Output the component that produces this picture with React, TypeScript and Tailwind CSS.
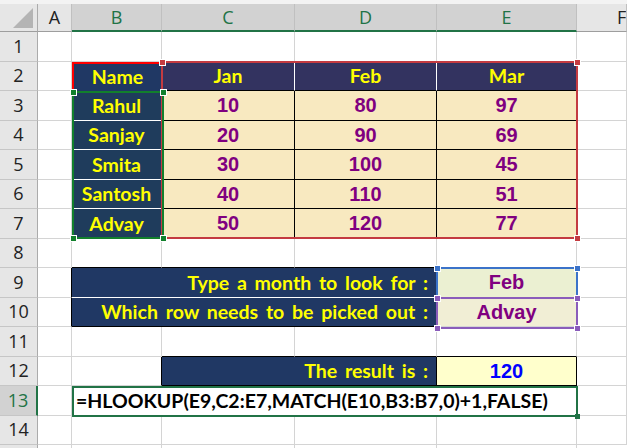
import type { ReactNode } from "react";

const CAL = "font-['Lato',sans-serif] font-bold";
const ARI = "font-['Liberation_Sans',Arial,sans-serif] font-bold";
const HDR = "font-['Open_Sans',sans-serif]";

type CellProps = {
  className?: string;
  r?: string;
  b?: string;
  children?: ReactNode;
};

function Cell({ className = "", r = "border-r-[#d4d4d4]", b = "border-b-[#d4d4d4]", children }: CellProps) {
  return (
    <div className={`flex min-w-0 items-center overflow-hidden whitespace-nowrap border-r border-b ${r} ${b} ${className}`}>
      {children}
    </div>
  );
}

function RowHead({ n, active }: { n?: number; active?: boolean }) {
  return (
    <div
      className={`flex items-center justify-center border-b border-b-[#c6c6c6] ${HDR} text-[18px] ${
        active
          ? "border-r-2 border-r-[#217346] bg-[#d2d2d2] text-[#217346]"
          : "border-r border-r-[#ababab] bg-[#e6e6e6] text-[#222222]"
      }`}
    >
      {n}
    </div>
  );
}

function ColHead({ label, active, className = "justify-center" }: { label: string; active?: boolean; className?: string }) {
  return (
    <div
      className={`flex items-center overflow-hidden border-r border-r-[#c0c0c0] ${HDR} text-[18px] ${className} ${
        active
          ? "border-b-2 border-b-[#217346] bg-[#d2d2d2] text-[#217346]"
          : "border-b border-b-[#9e9e9e] bg-[#e6e6e6] text-[#222222]"
      }`}
    >
      {label}
    </div>
  );
}

function Handle({ x, y, color }: { x: number; y: number; color: string }) {
  // corner grip of a formula reference box
  return (
    <div
      className={`absolute h-[7px] w-[7px] border border-white ${color}`}
      style={{ left: x - 3.5, top: y - 3.5 }}
    />
  );
}

const names = ["Rahul", "Sanjay", "Smita", "Santosh", "Advay"];
const sales = [
  [10, 80, 97],
  [20, 90, 69],
  [30, 100, 45],
  [40, 110, 51],
  [50, 120, 77],
];

const NAME = `justify-center ${CAL} text-[19.5px] text-[#ffff00]`;
const NUM = `justify-center ${ARI} text-[20px] text-[#800080]`;
const LABEL = `justify-end bg-[#203864] pr-[8px] ${CAL} text-[19.5px] text-[#ffff00] [word-spacing:3px]`;

export default function App() {
  return (
    <div className="relative grid h-[448px] w-[627px] grid-cols-[38px_34px_90px_133px_142px_140px_50px] grid-rows-[4px_28px_repeat(14,29.5px)_3px] overflow-hidden bg-white">
      {/* top strip */}
      <div className="col-span-7 bg-[#f3f3f3]" />

      {/* column headers */}
      <div className="relative border-r border-b border-r-[#ababab] border-b-[#9e9e9e] bg-[#e6e6e6]">
        <svg className="absolute left-[13px] top-[4px]" width="21" height="21" viewBox="0 0 21 21">
          <polygon points="0,20 20,0 20,20" fill="#b4b4b4" />
        </svg>
      </div>
      <ColHead label="A" />
      <ColHead label="B" active />
      <ColHead label="C" active />
      <ColHead label="D" active />
      <ColHead label="E" active />
      <ColHead label="F" className="justify-start pl-[40px]" />

      {/* row 1 */}
      <RowHead n={1} />
      <Cell />
      <Cell />
      <Cell />
      <Cell />
      <Cell />
      <Cell />

      {/* row 2 */}
      <RowHead n={2} />
      <Cell />
      <Cell
        className={`border-t-2 border-l-2 border-t-[#ff0000] border-l-[#ff0000] bg-[#203864] ${NAME}`}
        r="border-r-[#203864]"
        b="border-b-[#203864]"
      >
        Name
      </Cell>
      <Cell className={`bg-[#333360] ${NAME}`} r="border-r-white" b="border-b-black">
        Jan
      </Cell>
      <Cell className={`bg-[#333360] ${NAME}`} r="border-r-white" b="border-b-black">
        Feb
      </Cell>
      <Cell className={`bg-[#333360] ${NAME}`} r="border-r-[#333360]" b="border-b-black">
        Mar
      </Cell>
      <Cell />

      {/* rows 3-7 */}
      {names.map((name, i) => (
        <div key={name} className="contents">
          <RowHead n={i + 3} />
          <Cell />
          <Cell className={`bg-[#1f3c5c] ${NAME}`} r="border-r-[#1f3c5c]" b="border-b-white">
            {name}
          </Cell>
          <Cell className={`bg-[#f8e9c0] ${NUM}`} r="border-r-black" b="border-b-black">
            {sales[i][0]}
          </Cell>
          <Cell className={`bg-[#f8e9c0] ${NUM}`} r="border-r-black" b="border-b-black">
            {sales[i][1]}
          </Cell>
          <Cell className={`bg-[#f8e9c0] ${NUM}`} r="border-r-[#f8e9c0]" b="border-b-black">
            {sales[i][2]}
          </Cell>
          <Cell />
        </div>
      ))}

      {/* row 8 */}
      <RowHead n={8} />
      <Cell />
      <Cell b="border-b-black" />
      <Cell b="border-b-black" />
      <Cell b="border-b-black" />
      <Cell />
      <Cell />

      {/* row 9 */}
      <RowHead n={9} />
      <Cell r="border-r-black" />
      <Cell className={`col-span-3 ${LABEL}`} r="border-r-black" b="border-b-white">
        Type a month to look for :
      </Cell>
      <Cell className={`justify-center bg-[#ebf0d2] ${ARI} text-[20px] text-[#800080]`}>Feb</Cell>
      <Cell />

      {/* row 10 */}
      <RowHead n={10} />
      <Cell r="border-r-black" />
      <Cell className={`col-span-3 ${LABEL}`} r="border-r-black" b="border-b-black">
        Which row needs to be picked out :
      </Cell>
      <Cell className={`justify-center bg-[#f1eed5] ${ARI} text-[20px] text-[#800080]`}>Advay</Cell>
      <Cell />

      {/* row 11 */}
      <RowHead n={11} />
      <Cell />
      <Cell />
      <Cell b="border-b-black" />
      <Cell b="border-b-black" />
      <Cell b="border-b-black" />
      <Cell />

      {/* row 12 */}
      <RowHead n={12} />
      <Cell />
      <Cell r="border-r-black" />
      <Cell className={`col-span-2 ${LABEL} [word-spacing:2px]`} r="border-r-black" b="border-b-black">
        The result is :
      </Cell>
      <Cell
        className={`justify-center bg-[#ffffcc] ${ARI} text-[20px] text-[#0000ff]`}
        r="border-r-black"
        b="border-b-black"
      >
        120
      </Cell>
      <Cell />

      {/* row 13 - cell in edit mode */}
      <RowHead n={13} active />
      <Cell />
      <Cell
        className={`col-span-4 bg-white pl-[4px] ${CAL} text-[19.5px] text-black`}
        r="border-r-white"
        b="border-b-white"
      >
        =HLOOKUP(E9,C2:E7,MATCH(E10,B3:B7,0)+1,FALSE)
      </Cell>
      <Cell />

      {/* row 14 */}
      <RowHead n={14} />
      <Cell />
      <Cell />
      <Cell />
      <Cell />
      <Cell />
      <Cell />

      {/* row 15, cut off */}
      <div className="border-r border-r-[#ababab] bg-[#e6e6e6]" />
      <div className="border-r border-r-[#d4d4d4]" />
      <div className="border-r border-r-[#d4d4d4]" />
      <div className="border-r border-r-[#d4d4d4]" />
      <div className="border-r border-r-[#d4d4d4]" />
      <div className="border-r border-r-[#d4d4d4]" />
      <div />

      {/* formula reference boxes */}
      <div className="pointer-events-none absolute left-[161px] top-[61px] h-[178px] w-[417px] border-2 border-[#c43b41]" />
      <Handle x={162} y={62} color="bg-[#c43b41]" />
      <Handle x={577} y={62} color="bg-[#c43b41]" />
      <Handle x={577} y={238} color="bg-[#c43b41]" />

      <div className="pointer-events-none absolute left-[72px] top-[91px] h-[148px] w-[92px] border-2 border-[#12802c]" />
      <Handle x={73} y={92} color="bg-[#12802c]" />
      <Handle x={163} y={92} color="bg-[#12802c]" />
      <Handle x={73} y={238} color="bg-[#12802c]" />
      <Handle x={163} y={238} color="bg-[#12802c]" />

      <div className="pointer-events-none absolute left-[436px] top-[267px] h-[32px] w-[142px] border-2 border-[#3b73c9]" />
      <Handle x={437} y={268} color="bg-[#3b73c9]" />
      <Handle x={577} y={268} color="bg-[#3b73c9]" />

      <div className="pointer-events-none absolute left-[436px] top-[297px] h-[32px] w-[142px] border-2 border-[#8a5cbb]" />
      <Handle x={437} y={298} color="bg-[#8a5cbb]" />
      <Handle x={577} y={298} color="bg-[#8a5cbb]" />
      <Handle x={437} y={328} color="bg-[#8a5cbb]" />
      <Handle x={577} y={328} color="bg-[#8a5cbb]" />

      <div className="pointer-events-none absolute left-[72px] top-[386px] h-[31px] w-[506px] border-2 border-[#217346]" />
      <div className="absolute left-[575px] top-[414px] h-[5px] w-[5px] bg-[#217346]" />
    </div>
  );
}
